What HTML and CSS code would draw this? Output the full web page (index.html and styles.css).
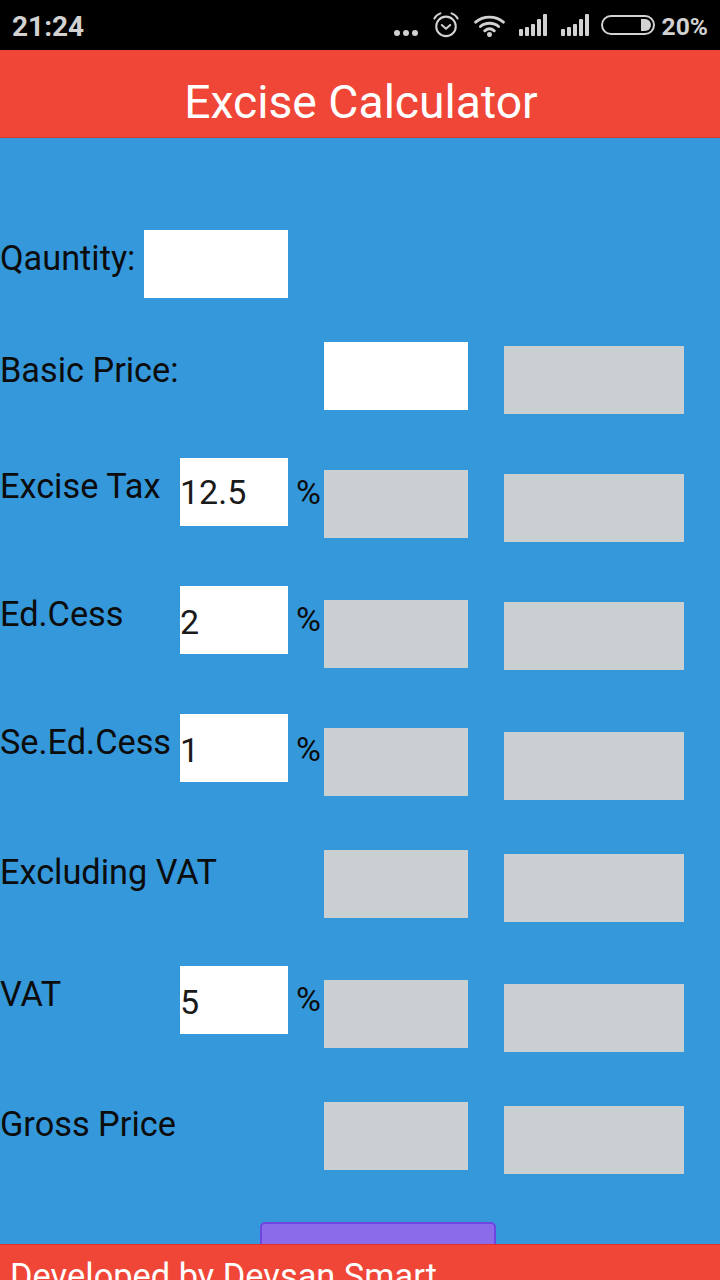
FILE: index.html
```html
<!DOCTYPE html>
<html lang="en">
  <head>
    <meta charset="UTF-8" />
    <meta name="viewport" content="width=device-width, initial-scale=1.0" />
    <title>Excise Calculator</title>
    <link rel="stylesheet" href="styles.css">
  </head>
  <body>
    <div class="status-bar">
      <span class="time">21:24</span>
      <div class="status-icons">
        <svg class="icon-dots" viewBox="0 0 26 8">
          <circle cx="4" cy="4" r="3"></circle>
          <circle cx="13" cy="4" r="3"></circle>
          <circle cx="22" cy="4" r="3"></circle>
        </svg>
        <svg class="icon-alarm" viewBox="0 0 28 28">
          <circle cx="14" cy="15.5" r="10.5"></circle>
          <polyline points="9.5,14 14,18 18.5,14"></polyline>
          <path d="M1.5 7 Q3.5 3 8 1.5"></path>
          <path d="M26.5 7 Q24.5 3 20 1.5"></path>
        </svg>
        <svg class="icon-wifi" viewBox="0 0 32 24">
          <path d="M1.5 8.5 C9.5 1.5 22.5 1.5 30.5 8.5"></path>
          <path d="M6.5 13 C11.5 8.5 20.5 8.5 25.5 13"></path>
          <path d="M11 17.5 C14 15 18 15 21 17.5"></path>
          <circle cx="16" cy="21.5" r="2.6"></circle>
        </svg>
        <svg class="icon-signal" viewBox="0 0 28 22">
          <rect x="0" y="15" width="4" height="7" rx="1"></rect>
          <rect x="6" y="13" width="4" height="9" rx="1"></rect>
          <rect x="12" y="10" width="4" height="12" rx="1"></rect>
          <rect x="18" y="5" width="4" height="17" rx="1"></rect>
          <rect x="24" y="0" width="4" height="22" rx="1"></rect>
        </svg>
        <svg class="icon-signal" viewBox="0 0 28 22">
          <rect x="0" y="15" width="4" height="7" rx="1"></rect>
          <rect x="6" y="13" width="4" height="9" rx="1"></rect>
          <rect x="12" y="10" width="4" height="12" rx="1"></rect>
          <rect x="18" y="5" width="4" height="17" rx="1"></rect>
          <rect x="24" y="0" width="4" height="22" rx="1"></rect>
        </svg>
        <svg class="icon-battery" viewBox="0 0 54 20">
          <rect class="battery-shell" x="1" y="1" width="52" height="18" rx="9"></rect>
          <path d="M40 4 H44 A6 6 0 0 1 44 16 H40 Z"></path>
        </svg>
        <span class="battery-text">20%</span>
      </div>
    </div>

    <header class="app-header">Excise Calculator</header>

    <main class="calc">
      <div class="row row-qty">
        <label class="label">Qauntity:</label>
        <input class="field" type="text">
      </div>

      <div class="row row-basic">
        <label class="label">Basic Price:</label>
        <span></span>
        <span></span>
        <input class="field" type="text">
        <span></span>
        <div class="output"></div>
      </div>

      <div class="row row-excise">
        <label class="label">Excise Tax</label>
        <input class="field" type="text" value="12.5">
        <span class="pct">%</span>
        <div class="output"></div>
        <span></span>
        <div class="output"></div>
      </div>

      <div class="row row-ed">
        <label class="label">Ed.Cess</label>
        <input class="field" type="text" value="2">
        <span class="pct">%</span>
        <div class="output"></div>
        <span></span>
        <div class="output"></div>
      </div>

      <div class="row row-se">
        <label class="label">Se.Ed.Cess</label>
        <input class="field" type="text" value="1">
        <span class="pct">%</span>
        <div class="output"></div>
        <span></span>
        <div class="output"></div>
      </div>

      <div class="row row-excl">
        <label class="label">Excluding VAT</label>
        <span></span>
        <span></span>
        <div class="output"></div>
        <span></span>
        <div class="output"></div>
      </div>

      <div class="row row-vat">
        <label class="label">VAT</label>
        <input class="field" type="text" value="5">
        <span class="pct">%</span>
        <div class="output"></div>
        <span></span>
        <div class="output"></div>
      </div>

      <div class="row row-gross">
        <label class="label">Gross Price</label>
        <span></span>
        <span></span>
        <div class="output"></div>
        <span></span>
        <div class="output"></div>
      </div>

      <button class="calc-button" type="button"></button>
    </main>

    <footer class="app-footer">Developed by Devsan Smart</footer>
  </body>
</html>
```

FILE: styles.css
```css
* {
  margin: 0;
  padding: 0;
  box-sizing: border-box;
  font-family: Roboto, "Liberation Sans", sans-serif;
}

html, body {
  width: 720px;
  height: 1280px;
  overflow: hidden;
}

body {
  display: flex;
  flex-direction: column;
  background-color: #3498db;
  color: #0c0c0c;
}

/* status bar */
.status-bar {
  height: 50px;
  flex-shrink: 0;
  background: #000000;
  color: #d2d2d2;
  display: flex;
  align-items: center;
  justify-content: space-between;
  padding: 0 12px;
}

.time {
  font-size: 28px;
  font-weight: 700;
  margin-top: 2px;
}

.status-icons {
  display: flex;
  align-items: center;
}

.status-icons svg {
  display: block;
  fill: #d2d2d2;
}

.icon-dots {
  width: 26px;
  height: 8px;
  margin-top: 16px;
  margin-right: 14px;
}

.icon-alarm {
  width: 26px;
  height: 26px;
  margin-top: -1px;
  margin-right: 15px;
}

.icon-wifi {
  width: 31px;
  height: 23px;
  margin-right: 14px;
}

.icon-signal {
  width: 28px;
  height: 22px;
  margin-right: 14px;
}

.icon-signal + .icon-signal {
  margin-right: 12px;
}

.icon-alarm circle,
.icon-alarm polyline,
.icon-alarm path {
  fill: none;
  stroke: #d2d2d2;
  stroke-width: 2.2;
  stroke-linecap: round;
}

.icon-wifi path {
  fill: none;
  stroke: #d2d2d2;
  stroke-width: 3;
  stroke-linecap: round;
}

.icon-battery {
  width: 54px;
  height: 20px;
  margin-right: 7px;
}

.battery-shell {
  fill: none;
  stroke: #d2d2d2;
  stroke-width: 2;
}

.battery-text {
  font-size: 24.6px;
  font-weight: 700;
  margin-top: 2px;
}

/* header */
.app-header {
  height: 88px;
  flex-shrink: 0;
  background: #ef4638;
  border-bottom: 1px solid #d83a30;
  color: #ffffff;
  font-size: 46.25px;
  text-align: center;
  line-height: 104px;
  padding-left: 2px;
  overflow: hidden;
}

/* form */
.calc {
  flex: 1;
  min-height: 0;
  overflow: hidden;
  padding-top: 92px;
}

.row {
  display: grid;
  grid-template-columns: 180px 108px 36px 144px 36px 180px;
  align-items: start;
  height: 68px;
}

.row-qty {
  grid-template-columns: 144px 144px;
}

.row-basic { margin-top: 44px; }
.row-excise { margin-top: 48px; }
.row-ed { margin-top: 60px; }
.row-se { margin-top: 60px; }
.row-excl { margin-top: 68px; }
.row-vat { margin-top: 48px; }
.row-gross { margin-top: 68px; }

.label {
  font-size: 34.3px;
  line-height: 38px;
  white-space: nowrap;
  margin-top: 9px;
}

.row-excl .label,
.row-gross .label {
  margin-top: 3px;
}

.field {
  display: block;
  width: 100%;
  height: 68px;
  border: none;
  background: #ffffff;
  color: #1a1a1a;
  font-size: 34px;
  padding: 4px 0 0 0;
  outline: none;
  border-radius: 0;
}

.row-excise .field {
  padding-top: 0;
}

.output {
  height: 68px;
  background: #cacfd2;
}

.pct {
  font-size: 34px;
  line-height: 38px;
  margin-top: 14px;
  padding-left: 8px;
}

.row-excise .pct { margin-top: 15px; }
.row-se .pct { margin-top: 16px; }

/* vertical offsets of the grey boxes, they don't line up between columns */
.row-basic .output { margin-top: 4px; }

.row-excise .output { margin-top: 12px; }
.row-excise .output:last-child { margin-top: 16px; }

.row-ed .output { margin-top: 14px; }
.row-ed .output:last-child { margin-top: 16px; }

.row-se .output { margin-top: 14px; }
.row-se .output:last-child { margin-top: 18px; }

.row-excl .output:last-child { margin-top: 4px; }

.row-vat .output { margin-top: 14px; }
.row-vat .output:last-child { margin-top: 18px; }

.row-gross .output:last-child { margin-top: 4px; }

.calc-button {
  display: block;
  width: 236px;
  height: 60px;
  margin: 52px 0 0 260px;
  background: #8c6be9;
  border: 2px solid #6f45e2;
  border-radius: 5px;
}

/* footer */
.app-footer {
  height: 36px;
  flex-shrink: 0;
  background: #ef4638;
  border-top: 1px solid #e5302a;
  color: #ffffff;
  font-size: 34.4px;
  line-height: 62px;
  padding-left: 10px;
  overflow: hidden;
  white-space: nowrap;
}
```
